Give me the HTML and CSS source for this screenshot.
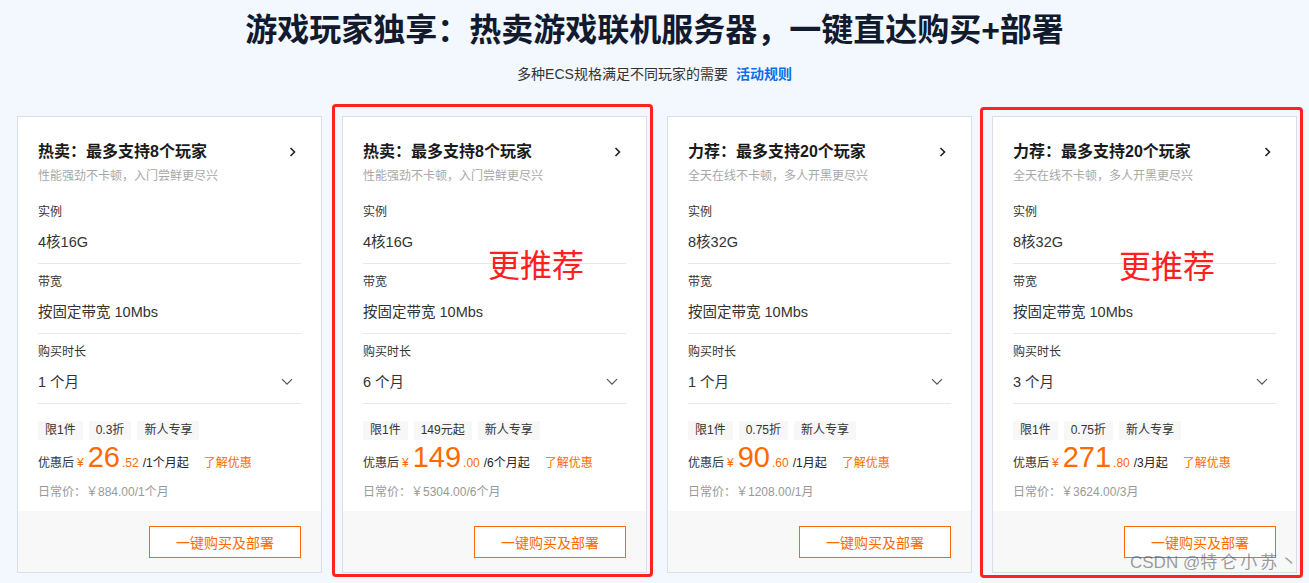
FILE: index.html
```html
<!DOCTYPE html>
<html lang="zh-CN">
<head>
<meta charset="utf-8">
<title>游戏玩家独享</title>
<link rel="stylesheet" href="styles.css">
</head>
<body>
<header class="hero">
  <h1 class="hero-title">游戏玩家独享：热卖游戏联机服务器，一键直达购买+部署</h1>
  <p class="hero-sub">多种ECS规格满足不同玩家的需要<a class="hero-link" href="#">活动规则</a></p>
</header>

<main class="cards">
  <!-- card 1 -->
  <section class="card">
    <div class="card-body">
      <div class="card-head">
        <h2 class="card-title">热卖：最多支持8个玩家</h2>
        <svg class="chev-right" width="7" height="10" viewBox="0 0 7 10"><path d="M1.5 1 L5.5 5 L1.5 9" fill="none" stroke="#222" stroke-width="1.6"/></svg>
      </div>
      <p class="card-desc">性能强劲不卡顿，入门尝鲜更尽兴</p>
      <div class="field"><div class="field-label">实例</div><div class="field-value">4核16G</div></div>
      <div class="field"><div class="field-label">带宽</div><div class="field-value">按固定带宽 10Mbs</div></div>
      <div class="field"><div class="field-label">购买时长</div><div class="field-value select"><span>1 个月</span><svg class="chev-down" width="12" height="8" viewBox="0 0 12 8"><path d="M1 1.2 L6 6.2 L11 1.2" fill="none" stroke="#555" stroke-width="1.2"/></svg></div></div>
      <div class="tags"><span class="tag">限1件</span><span class="tag">0.3折</span><span class="tag">新人专享</span></div>
      <div class="price"><span class="p-label">优惠后</span><span class="p-cur">¥</span><span class="p-int">26</span><span class="p-dec">.52</span><span class="p-unit">/1个月起</span><a class="p-more" href="#">了解优惠</a></div>
      <div class="list-price">日常价：￥884.00/1个月</div>
    </div>
    <div class="card-foot"><button class="buy-btn">一键购买及部署</button></div>
  </section>

  <!-- card 2 -->
  <section class="card">
    <div class="card-body">
      <div class="card-head">
        <h2 class="card-title">热卖：最多支持8个玩家</h2>
        <svg class="chev-right" width="7" height="10" viewBox="0 0 7 10"><path d="M1.5 1 L5.5 5 L1.5 9" fill="none" stroke="#222" stroke-width="1.6"/></svg>
      </div>
      <p class="card-desc">性能强劲不卡顿，入门尝鲜更尽兴</p>
      <div class="field"><div class="field-label">实例</div><div class="field-value">4核16G</div></div>
      <div class="field"><div class="field-label">带宽</div><div class="field-value">按固定带宽 10Mbs</div></div>
      <div class="field"><div class="field-label">购买时长</div><div class="field-value select"><span>6 个月</span><svg class="chev-down" width="12" height="8" viewBox="0 0 12 8"><path d="M1 1.2 L6 6.2 L11 1.2" fill="none" stroke="#555" stroke-width="1.2"/></svg></div></div>
      <div class="tags"><span class="tag">限1件</span><span class="tag">149元起</span><span class="tag">新人专享</span></div>
      <div class="price"><span class="p-label">优惠后</span><span class="p-cur">¥</span><span class="p-int">149</span><span class="p-dec">.00</span><span class="p-unit">/6个月起</span><a class="p-more" href="#">了解优惠</a></div>
      <div class="list-price">日常价：￥5304.00/6个月</div>
    </div>
    <div class="card-foot"><button class="buy-btn">一键购买及部署</button></div>
    <div class="mark mark-a"></div>
    <div class="mark-text mark-text-a">更推荐</div>
  </section>

  <!-- card 3 -->
  <section class="card">
    <div class="card-body">
      <div class="card-head">
        <h2 class="card-title">力荐：最多支持20个玩家</h2>
        <svg class="chev-right" width="7" height="10" viewBox="0 0 7 10"><path d="M1.5 1 L5.5 5 L1.5 9" fill="none" stroke="#222" stroke-width="1.6"/></svg>
      </div>
      <p class="card-desc">全天在线不卡顿，多人开黑更尽兴</p>
      <div class="field"><div class="field-label">实例</div><div class="field-value">8核32G</div></div>
      <div class="field"><div class="field-label">带宽</div><div class="field-value">按固定带宽 10Mbs</div></div>
      <div class="field"><div class="field-label">购买时长</div><div class="field-value select"><span>1 个月</span><svg class="chev-down" width="12" height="8" viewBox="0 0 12 8"><path d="M1 1.2 L6 6.2 L11 1.2" fill="none" stroke="#555" stroke-width="1.2"/></svg></div></div>
      <div class="tags"><span class="tag">限1件</span><span class="tag">0.75折</span><span class="tag">新人专享</span></div>
      <div class="price"><span class="p-label">优惠后</span><span class="p-cur">¥</span><span class="p-int">90</span><span class="p-dec">.60</span><span class="p-unit">/1月起</span><a class="p-more" href="#">了解优惠</a></div>
      <div class="list-price">日常价：￥1208.00/1月</div>
    </div>
    <div class="card-foot"><button class="buy-btn">一键购买及部署</button></div>
  </section>

  <!-- card 4 -->
  <section class="card">
    <div class="card-body">
      <div class="card-head">
        <h2 class="card-title">力荐：最多支持20个玩家</h2>
        <svg class="chev-right" width="7" height="10" viewBox="0 0 7 10"><path d="M1.5 1 L5.5 5 L1.5 9" fill="none" stroke="#222" stroke-width="1.6"/></svg>
      </div>
      <p class="card-desc">全天在线不卡顿，多人开黑更尽兴</p>
      <div class="field"><div class="field-label">实例</div><div class="field-value">8核32G</div></div>
      <div class="field"><div class="field-label">带宽</div><div class="field-value">按固定带宽 10Mbs</div></div>
      <div class="field"><div class="field-label">购买时长</div><div class="field-value select"><span>3 个月</span><svg class="chev-down" width="12" height="8" viewBox="0 0 12 8"><path d="M1 1.2 L6 6.2 L11 1.2" fill="none" stroke="#555" stroke-width="1.2"/></svg></div></div>
      <div class="tags"><span class="tag">限1件</span><span class="tag">0.75折</span><span class="tag">新人专享</span></div>
      <div class="price"><span class="p-label">优惠后</span><span class="p-cur">¥</span><span class="p-int">271</span><span class="p-dec">.80</span><span class="p-unit">/3月起</span><a class="p-more" href="#">了解优惠</a></div>
      <div class="list-price">日常价：￥3624.00/3月</div>
    </div>
    <div class="card-foot"><button class="buy-btn">一键购买及部署</button></div>
    <div class="mark mark-b"></div>
    <div class="mark-text mark-text-b">更推荐</div>
  </section>
</main>

<div class="watermark">CSDN @<span class="wm-cjk">特仑小苏丶</span></div>
</body>
</html>
```

FILE: styles.css
```css
* { box-sizing: border-box; }

html, body {
  margin: 0;
  padding: 0;
}

body {
  background: #f3f7fe;
  font-family: "Liberation Sans", "Noto Sans CJK SC", sans-serif;
  color: #333;
  width: 1309px;
  height: 583px;
  overflow: hidden;
  position: relative;
}

.hero {
  text-align: center;
  padding-top: 10px;
}

.hero-title {
  margin: 0;
  font-size: 32px;
  line-height: 40px;
  font-weight: 700;
  color: #121a2e;
}

.hero-sub {
  margin: 14px 0 0;
  font-size: 14px;
  line-height: 20px;
  color: #333;
}

.hero-link {
  margin-left: 8px;
  color: #0a6fe8;
  font-weight: 700;
  text-decoration: none;
}

.cards {
  display: flex;
  gap: 20px;
  padding-left: 17px;
  margin-top: 32px;
}

.card {
  position: relative;
  width: 305px;
  height: 457px;
  background: #fff;
  border: 1px solid #dadee6;
  display: flex;
  flex-direction: column;
}

.card-body {
  flex: 1;
  padding: 24px 20px 0 20px;
}

.card-head {
  display: flex;
  align-items: center;
  justify-content: space-between;
}

.card-title {
  margin: 0;
  font-size: 16px;
  line-height: 22px;
  font-weight: 700;
  color: #1a1a1a;
}

.chev-right {
  margin-right: 5px;
  display: block;
}

.card-desc {
  margin: 4px 0 9px;
  font-size: 12px;
  line-height: 18px;
  color: #a8a8a8;
}

.field {
  padding: 9px 0 11px;
  border-bottom: 1px solid #e8e8e8;
}

.field-label {
  font-size: 12px;
  line-height: 18px;
  color: #333;
}

.field-value {
  margin-top: 11px;
  font-size: 14.5px;
  line-height: 20px;
  color: #333;
}

.field-value.select {
  display: flex;
  align-items: center;
  justify-content: space-between;
}

.chev-down {
  display: block;
  margin-right: 8px;
}

.tags {
  display: flex;
  gap: 6px;
  margin-top: 17px;
}

.tag {
  height: 19px;
  line-height: 19px;
  padding: 0 7px;
  background: #f7f7f7;
  font-size: 12px;
  color: #333;
}

.price {
  display: flex;
  align-items: baseline;
  margin-top: 3px;
  height: 29px;
  font-size: 12px;
  color: #333;
}

.p-cur {
  margin-left: 3px;
  color: #ff6a00;
}

.p-int {
  margin-left: 4px;
  font-size: 29px;
  line-height: 29px;
  color: #ff6a00;
}

.p-dec {
  margin-left: 2px;
  color: #ff6a00;
}

.p-unit {
  margin-left: 4px;
  color: #222;
}

.p-more {
  margin-left: 15px;
  color: #ff6a00;
  text-decoration: none;
}

.list-price {
  margin-top: 11px;
  font-size: 12px;
  line-height: 18px;
  color: #999;
}

.card-foot {
  background: #f8f8f8;
  height: 61px;
  padding: 15px 20px 0;
  display: flex;
  justify-content: flex-end;
  align-items: flex-start;
}

.buy-btn {
  width: 152px;
  height: 32px;
  background: #fff;
  border: 1px solid #ff6a00;
  color: #ff6a00;
  font-family: "Liberation Sans", "Noto Sans CJK SC", sans-serif;
  font-size: 14px;
  padding: 0;
}

/* red annotations drawn over the cards */
.mark {
  position: absolute;
  border: 3px solid #ff2222;
  border-radius: 4px;
  pointer-events: none;
}

.mark-a { left: -11px; right: -7px; top: -13px; bottom: -5px; }
.mark-b { left: -13px; right: -7px; top: -10px; bottom: -6px; }

.mark-text {
  position: absolute;
  font-family: "Noto Sans CJK SC", sans-serif;
  font-size: 32px;
  line-height: 36px;
  font-weight: 400;
  color: #ff2020;
  white-space: nowrap;
}

.mark-text-a { left: 145px; top: 128px; }
.mark-text-b { left: 126px; top: 129px; }

.watermark {
  position: absolute;
  left: 1130px;
  top: 552px;
  font-family: "Liberation Sans", "Noto Sans CJK SC", sans-serif;
  font-size: 17px;
  line-height: 22px;
  color: rgba(90, 90, 90, 0.6);
  white-space: nowrap;
}

.wm-cjk {
  letter-spacing: 3px;
}
```
